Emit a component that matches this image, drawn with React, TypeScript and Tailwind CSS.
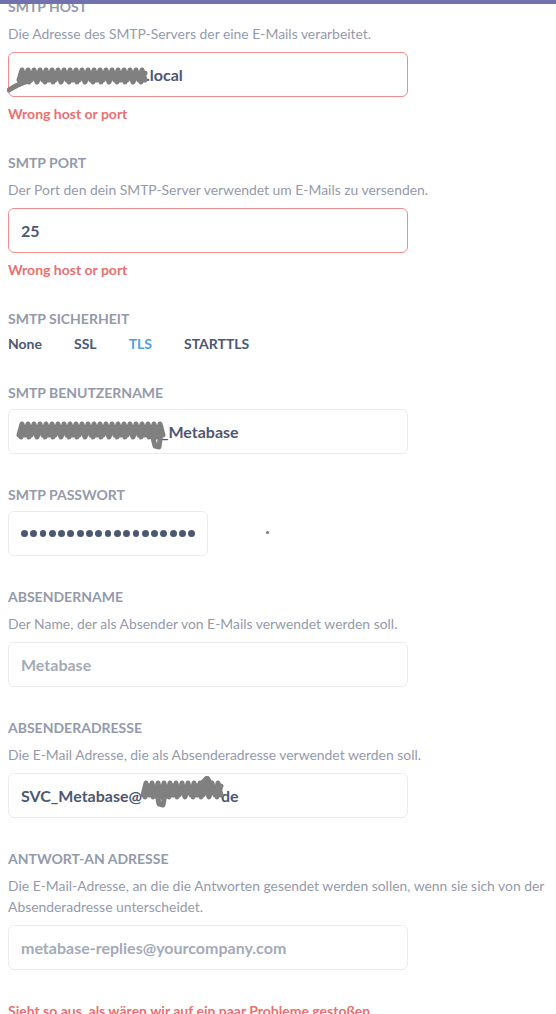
import React from "react";

const labelCls = "block text-[14px] leading-[20px] font-bold uppercase text-[#949aab]";
const descCls = "mt-[6px] text-[13.9px] leading-[21px] text-[#949aab]";
const errorCls = "mt-[7px] text-[14px] leading-[20px] font-bold text-[#ed6e6e]";
const boxCls =
  "relative flex h-[45px] items-center rounded-[6px] border bg-white px-[12px] text-[16px] font-bold whitespace-nowrap";

// dense zig-zag that fills a band, used to draw the redaction scribbles
function zigzag(x0: number, x1: number, yTop: number, yBot: number, step: number) {
  let d = `M${x0} ${yBot}`;
  let up = true;
  for (let x = x0 + step; x <= x1; x += step) {
    d += ` L${x} ${up ? yTop : yBot}`;
    up = !up;
  }
  return d;
}

function Scribble({ d, className }: { d: string; className: string }) {
  return (
    <svg className={className} viewBox="0 0 220 60" width="220" height="60" fill="none">
      <path d={d} stroke="#808080" strokeWidth="5" strokeLinecap="round" strokeLinejoin="round" />
    </svg>
  );
}

function Field({
  label,
  desc,
  error,
  children,
  gap = "mb-[31px]",
}: {
  label: string;
  desc?: string;
  error?: string;
  children: React.ReactNode;
  gap?: string;
}) {
  return (
    <div className={gap}>
      <div className={labelCls}>{label}</div>
      {desc && <p className={descCls}>{desc}</p>}
      <div className={desc ? "mt-[8px]" : "mt-[6px]"}>{children}</div>
      {error && <div className={errorCls}>{error}</div>}
    </div>
  );
}

export default function App() {
  return (
    <div className="min-h-[1014px] bg-white font-['Lato','Noto_Sans',sans-serif]">
      <div className="fixed left-0 right-0 top-0 z-10 h-[4px] bg-[#7172ad]" />

      <div className="-mt-[3px] pl-[8px]">
        <Field
          label="SMTP Host"
          desc="Die Adresse des SMTP-Servers der eine E-Mails verarbeitet."
          error="Wrong host or port"
          gap="mb-[29px]"
        >
          <div className={boxCls + " w-[400px] border-[#ef8c8c] text-[#4c5773]"}>
            <span className="inline-block w-[125px]" />
            <span>.local</span>
            <Scribble
              className="pointer-events-none absolute left-[-2px] top-[8px]"
              d={
                zigzag(12, 140, 9, 19, 3) +
                " " +
                zigzag(14, 138, 12, 21, 4) +
                " M2 29 C 8 25, 14 22, 24 19"
              }
            />
          </div>
        </Field>

        <Field
          label="SMTP Port"
          desc="Der Port den dein SMTP-Server verwendet um E-Mails zu versenden."
          error="Wrong host or port"
          gap="mb-[29px]"
        >
          <div className={boxCls + " w-[400px] border-[#ef8c8c] text-[#4c5773]"}>25</div>
        </Field>

        <div className="mb-[29px]">
          <div className={labelCls}>SMTP Sicherheit</div>
          <div className="mt-[5px] flex gap-[32px] text-[14px] leading-[20px] font-bold text-[#4c5773]">
            <span>None</span>
            <span>SSL</span>
            <span className="text-[#509ee3]">TLS</span>
            <span>STARTTLS</span>
          </div>
        </div>

        <Field label="SMTP Benutzername">
          <div className={boxCls + " w-[400px] border-[#ebebeb] text-[#4c5773]"}>
            <span className="inline-block w-[140px]" />
            <span>_Metabase</span>
            <Scribble
              className="pointer-events-none absolute left-[6px] top-[6px]"
              d={
                zigzag(4, 148, 8, 19, 3) +
                " " +
                zigzag(6, 146, 11, 21, 4) +
                " M136 14 L140 30 L144 31 L146 16"
              }
            />
          </div>
        </Field>

        <Field label="SMTP Passwort">
          <div className="flex items-center">
            <div className={boxCls + " w-[200px] gap-[2.5px] border-[#ebebeb]"}>
              {Array.from({ length: 19 }).map((_, i) => (
                <span key={i} className="inline-block h-[7px] w-[7px] rounded-full bg-[#4c5773]" />
              ))}
            </div>
            <span className="ml-[58px] mt-[-3px] inline-block h-[3px] w-[3px] rounded-full bg-[#777]" />
          </div>
        </Field>

        <Field label="Absendername" desc="Der Name, der als Absender von E-Mails verwendet werden soll.">
          <div className={boxCls + " w-[400px] border-[#ebebeb] text-[#a5aab8]"}>Metabase</div>
        </Field>

        <Field label="Absenderadresse" desc="Die E-Mail Adresse, die als Absenderadresse verwendet werden soll.">
          <div className={boxCls + " w-[400px] border-[#ebebeb] text-[#4c5773]"}>
            <span>SVC_Metabase@</span>
            <span className="inline-block w-[79px]" />
            <span>de</span>
            <Scribble
              className="pointer-events-none absolute left-[128px] top-[2px]"
              d={
                zigzag(6, 84, 7, 19, 3) +
                " " +
                zigzag(8, 84, 10, 21, 4) +
                " M20 18 L22 28 L26 29 L28 18 M66 6 L70 2 L74 8"
              }
            />
          </div>
        </Field>

        <Field
          label="Antwort-an Adresse"
          desc="Die E-Mail-Adresse, an die die Antworten gesendet werden sollen, wenn sie sich von der Absenderadresse unterscheidet."
        >
          <div className={boxCls + " w-[400px] border-[#ebebeb] text-[#a5aab8]"}>
            metabase-replies@yourcompany.com
          </div>
        </Field>

        <div className="text-[14px] leading-[20px] font-bold text-[#ed6e6e]">
          Sieht so aus, als wären wir auf ein paar Probleme gestoßen
        </div>
      </div>
    </div>
  );
}
